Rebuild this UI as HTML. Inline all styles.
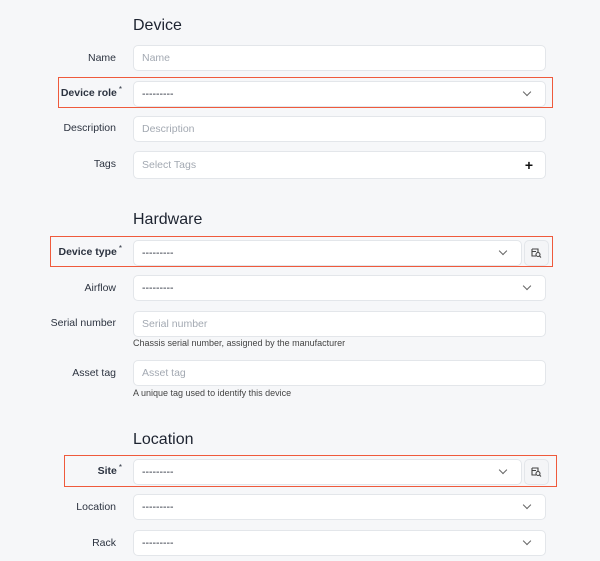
<!DOCTYPE html>
<html><head><style>
body{margin:0;width:600px;height:561px;background:#f6f7f9;font-family:"Liberation Sans",sans-serif;position:relative;overflow:hidden;color:#1d2330}
.h{position:absolute;left:133px;font-size:16px;color:#1d2330}
.l{position:absolute;right:484px;font-size:10.5px;line-height:12px;color:#2c3340;text-align:right}
.l b{font-weight:bold}
.l .a{font-size:8px;position:relative;top:-4px;margin-left:2px}
.i{position:absolute;left:133px;height:24px;background:#fff;border:1px solid #e3e6ea;border-radius:5px;font-size:10.5px;line-height:24px;padding-left:8px;box-sizing:content-box;width:403px;color:#a3a9b2}
.i.v{color:#1d2330}
.i.s{width:379px}
.c{position:absolute;right:15px;top:7px;width:5px;height:5px;border-right:1.2px solid #666;border-bottom:1.2px solid #666;transform:rotate(45deg)}
.b{position:absolute;left:524px;width:23px;height:24px;background:#f4f5f7;border:1px solid #e3e6ea;border-radius:5px}
.b svg{position:absolute;left:6px;top:7px}
.r{position:absolute;border:1.5px solid #ef5a3c}
.t{position:absolute;left:133px;font-size:9px;color:#444}
</style></head><body>
<div class="h" style="top:17px">Device</div>
<div class="l" style="top:52px">Name</div>
<div class="i" style="top:45px">Name</div>
<div class="r" style="left:58px;top:77px;width:493px;height:29px"></div>
<div class="l" style="top:87px;right:478px"><b>Device role</b><span class="a">*</span></div>
<div class="i v" style="top:81px">---------<span class="c"></span></div>
<div class="l" style="top:122px">Description</div>
<div class="i" style="top:116px">Description</div>
<div class="l" style="top:158px">Tags</div>
<div class="i" style="top:151px;height:26px;line-height:26px">Select Tags<span style="position:absolute;right:12px;color:#111;font-weight:bold;font-size:14px">+</span></div>

<div class="h" style="top:211px">Hardware</div>
<div class="r" style="left:50px;top:236px;width:501px;height:29px"></div>
<div class="l" style="top:246px;right:478px"><b>Device type</b><span class="a">*</span></div>
<div class="i v s" style="top:240px">---------<span class="c"></span></div>
<div class="b" style="top:240px"><svg width="11" height="10" viewBox="0 0 11 10" fill="none" stroke="#444" stroke-width="1.1"><path d="M1 1h6v3M1 1v7h4M1 3.5h4"/><circle cx="7" cy="6.5" r="2"/><path d="M8.5 8l1.5 1.5"/></svg></div>
<div class="l" style="top:282px">Airflow</div>
<div class="i v" style="top:275px">---------<span class="c"></span></div>
<div class="l" style="top:317px">Serial number</div>
<div class="i" style="top:311px">Serial number</div>
<div class="t" style="top:338px">Chassis serial number, assigned by the manufacturer</div>
<div class="l" style="top:367px">Asset tag</div>
<div class="i" style="top:360px">Asset tag</div>
<div class="t" style="top:388px">A unique tag used to identify this device</div>

<div class="h" style="top:431px">Location</div>
<div class="r" style="left:64px;top:455px;width:491px;height:30px"></div>
<div class="l" style="top:465px;right:478px"><b>Site</b><span class="a">*</span></div>
<div class="i v s" style="top:459px">---------<span class="c"></span></div>
<div class="b" style="top:459px"><svg width="11" height="10" viewBox="0 0 11 10" fill="none" stroke="#444" stroke-width="1.1"><path d="M1 1h6v3M1 1v7h4M1 3.5h4"/><circle cx="7" cy="6.5" r="2"/><path d="M8.5 8l1.5 1.5"/></svg></div>
<div class="l" style="top:501px">Location</div>
<div class="i v" style="top:494px">---------<span class="c"></span></div>
<div class="l" style="top:537px">Rack</div>
<div class="i v" style="top:530px">---------<span class="c"></span></div>
</body></html>
